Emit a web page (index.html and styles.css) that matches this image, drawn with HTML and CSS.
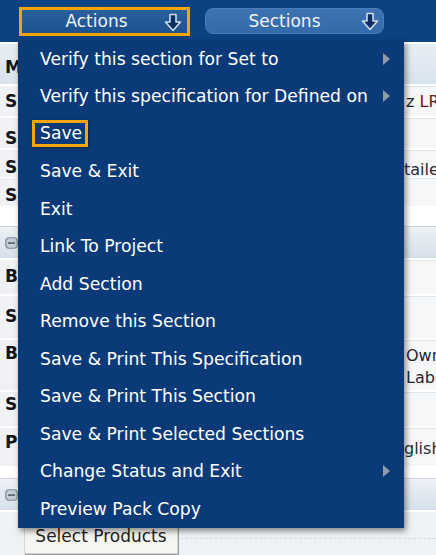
FILE: index.html
```html
<!DOCTYPE html>
<html>
<head>
<meta charset="utf-8">
<link rel="stylesheet" href="styles.css">
</head>
<body>
<div class="topbar">
  <button class="btn btn-actions"><span class="btn-label">Actions</span>
    <svg class="arrow" width="18" height="19" viewBox="0 0 18 19"><path d="M6 1.5H12V9H16.5L9 17.5L1.5 9H6Z" fill="#0b2f62" stroke="#cfdbea" stroke-width="1.6" stroke-linejoin="round"/></svg>
  </button>
  <button class="btn btn-sections"><span class="btn-label">Sections</span>
    <svg class="arrow" width="18" height="19" viewBox="0 0 18 19"><path d="M6 1.5H12V9H16.5L9 17.5L1.5 9H6Z" fill="#0b2f62" stroke="#cfdbea" stroke-width="1.6" stroke-linejoin="round"/></svg>
  </button>
</div>

<div class="page">
  <div class="row head"><div class="lab">M</div><div class="val"></div></div>
  <div class="row r1"><div class="lab">S</div><div class="val"><span class="dark">z</span> <span class="red">LR</span></div></div>
  <div class="row r2"><div class="lab">S</div><div class="val"></div></div>
  <div class="row r3"><div class="lab">S</div><div class="val">taile</div></div>
  <div class="row r4"><div class="lab">S</div><div class="val"></div></div>
  <div class="spacer s1"></div>
  <div class="section"><svg class="collapse" width="13" height="12" viewBox="0 0 13 12"><rect x="0.75" y="0.75" width="11.5" height="10.5" rx="3.5" fill="#c5ced8" stroke="#7f8b98" stroke-width="1.2"/><rect x="3" y="5.2" width="7" height="1.8" fill="#5f6b78"/></svg></div>
  <div class="row r5"><div class="lab">B</div><div class="val"></div></div>
  <div class="row r6"><div class="lab">S</div><div class="val"></div></div>
  <div class="row r7"><div class="lab">B</div><div class="val two">Own<br>Labe</div></div>
  <div class="row r8"><div class="lab">S</div><div class="val"></div></div>
  <div class="row r9"><div class="lab">P</div><div class="val">glish</div></div>
  <div class="spacer s2"></div>
  <div class="section"><svg class="collapse" width="13" height="12" viewBox="0 0 13 12"><rect x="0.75" y="0.75" width="11.5" height="10.5" rx="3.5" fill="#c5ced8" stroke="#7f8b98" stroke-width="1.2"/><rect x="3" y="5.2" width="7" height="1.8" fill="#5f6b78"/></svg></div>
  <div class="content">
    <button class="select-btn">Select Products</button>
    <div class="dashed"></div>
  </div>
</div>

<ul class="menu">
  <li class="item"><span>Verify this section for Set to</span><i class="sub"></i></li>
  <li class="item"><span>Verify this specification for Defined on</span><i class="sub"></i></li>
  <li class="item"><span class="focus">Save</span></li>
  <li class="item"><span>Save &amp; Exit</span></li>
  <li class="item"><span>Exit</span></li>
  <li class="item"><span>Link To Project</span></li>
  <li class="item"><span>Add Section</span></li>
  <li class="item"><span>Remove this Section</span></li>
  <li class="item"><span>Save &amp; Print This Specification</span></li>
  <li class="item"><span>Save &amp; Print This Section</span></li>
  <li class="item"><span>Save &amp; Print Selected Sections</span></li>
  <li class="item"><span>Change Status and Exit</span><i class="sub"></i></li>
  <li class="item"><span>Preview Pack Copy</span></li>
</ul>
</body>
</html>
```

FILE: styles.css
```css
* { box-sizing: border-box; }
html, body { margin: 0; padding: 0; }
body {
  width: 436px;
  height: 555px;
  overflow: hidden;
  background: #ffffff;
  font-family: "DejaVu Sans", Verdana, sans-serif;
  font-size: 17px;
  position: relative;
}

.topbar {
  height: 42px;
  background: #0d4280;
  display: flex;
  align-items: flex-start;
  padding: 7px 0 0 19px;
  gap: 15px;
}
.btn {
  font-family: inherit;
  font-size: 17px;
  color: #eef3f9;
  display: flex;
  align-items: center;
  justify-content: center;
  position: relative;
  padding: 0;
  margin: 0;
  cursor: pointer;
}
.btn-actions {
  width: 171px;
  height: 29px;
  border: 3px solid #f5a500;
  background: linear-gradient(#2b609f, #1d5190);
}
.btn-actions .btn-label { margin-right: 16px; margin-top: -2px; }
.btn-actions .arrow { position: absolute; right: 5px; top: 3px; }
.btn-sections {
  margin-top: 1px;
  width: 179px;
  height: 26px;
  border: 1px solid #4a7dba;
  border-radius: 8px;
  background: linear-gradient(#3d73b3, #346aa9);
}
.btn-sections .btn-label { margin-right: 20px; margin-top: -1px; }
.btn-sections .arrow { position: absolute; right: 4px; top: 3px; }

.page { padding-top: 2px; }
.row {
  display: grid;
  grid-template-columns: 198px 1fr;
  gap: 2px;
  margin-bottom: 2px;
}
.lab {
  background: #eff1f4;
  font-weight: bold;
  color: #141414;
  padding-left: 5px;
  line-height: 20px;
}
.val {
  background: #f6f7f9;
  border-top: 1px solid #e2e7ec;
  color: #2a2a36;
  padding-left: 206px;
  white-space: nowrap;
  overflow: hidden;
  line-height: 20px;
  font-size: 16px;
}
.dark { color: #222; }
.red { color: #6e1616; }

.head { height: 40px; }
.head .lab, .head .val { background: linear-gradient(#e6edf4, #d9e3ed); border: 0; }
.head .lab { padding-top: 13px; }
.r1 { height: 30px; }
.r1 .lab { padding-top: 5px; }
.r1 .val { padding-top: 5px; }
.r2 { height: 30px; }
.r2 .lab { padding-top: 10px; }
.r3 { height: 26px; }
.r3 .lab { padding-top: 7px; }
.r3 .val { padding-top: 9px; padding-left: 204px; }
.r4 { height: 28px; }
.r4 .lab { padding-top: 7px; }
.spacer { background: #ffffff; }
.s1 { height: 18px; }
.s2 { height: 10px; }

.section {
  height: 32px;
  background: linear-gradient(#edf1f6, #d6e0ea);
  border-top: 1px solid #cdd6df;
  margin-bottom: 2px;
  padding: 10px 0 0 5px;
}
.collapse { display: block; }

.r5 { height: 34px; }
.r5 .lab { padding-top: 6px; }
.r6 { height: 42px; }
.r6 .lab { padding-top: 10px; }
.r7 { height: 50px; }
.r7 .lab { padding-top: 3px; }
.r7 .val { padding-top: 4px; line-height: 22px; color: #2b2431; }
.r8 { height: 34px; }
.r8 .lab { padding-top: 2px; }
.r9 { height: 38px; }
.r9 .lab { padding-top: 4px; }
.r9 .val { padding-top: 10px; padding-left: 204px; }

.content {
  height: 60px;
  background: #eef2f6;
  padding: 7px 0 0 24px;
  position: relative;
}
.select-btn {
  font-family: inherit;
  font-size: 17px;
  color: #222;
  width: 154px;
  height: 35px;
  background: #f5f5f2;
  border: 1px solid #d5d5d0;
  box-shadow: 1px 1px 0 #9a9a9a;
  padding: 0;
  text-align: center;
  line-height: 33px;
}
.dashed {
  position: absolute;
  left: 180px;
  right: 0;
  top: 26px;
  border-top: 1px dashed #d4d9df;
}

.menu {
  position: absolute;
  left: 18px;
  top: 40px;
  width: 386px;
  margin: 0;
  padding: 0;
  list-style: none;
  background: #0a3b78;
  box-shadow: 2px 3px 6px rgba(0, 0, 0, 0.45);
}
.item {
  height: 37.5px;
  display: flex;
  align-items: center;
  justify-content: space-between;
  padding: 0 14px 0 22px;
  color: #ffffff;
  font-size: 17.2px;
  white-space: nowrap;
}
.focus {
  display: inline-block;
  border: 3px solid #f5a400;
  margin-left: -8px;
  padding: 0 3px 0 5px;
  line-height: 21px;
  box-shadow: 1px 1px 3px rgba(0,0,0,0.4);
}
.sub {
  display: block;
  width: 0;
  height: 0;
  border-left: 7px solid #8f9bab;
  border-top: 6px solid transparent;
  border-bottom: 6px solid transparent;
}
```
